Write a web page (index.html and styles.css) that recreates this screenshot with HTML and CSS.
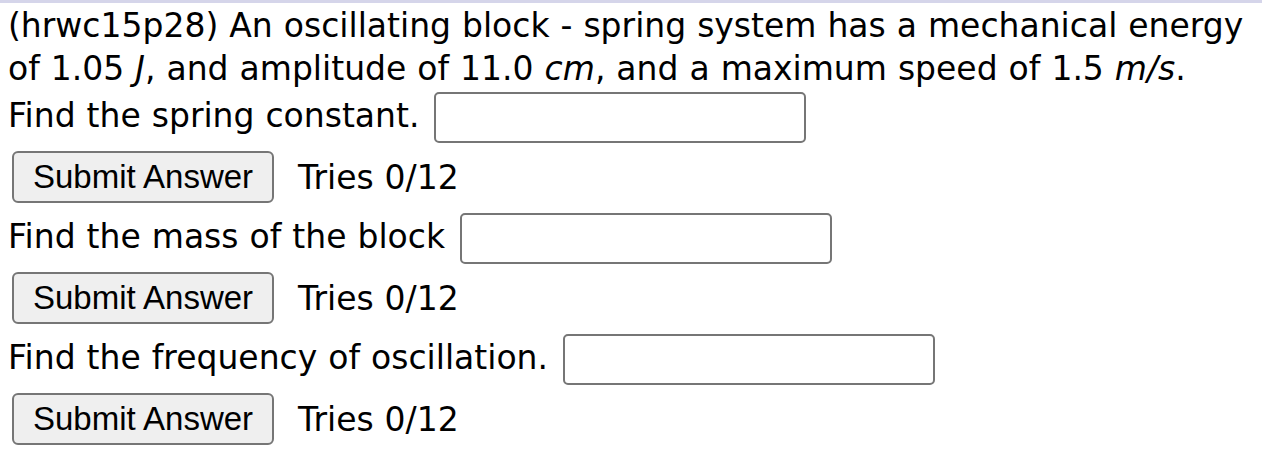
FILE: index.html
```html
<!DOCTYPE html>
<html lang="en">
<head>
    <meta charset="UTF-8">
    <title>hrwc15p28</title>
    <link rel="stylesheet" href="styles.css">
</head>
<body>
    <div class="problem">
        <p class="prompt">(hrwc15p28) An oscillating block - spring system has a mechanical energy of 1.05 <i>J</i>, and amplitude of 11.0 <i>cm</i>, and a maximum speed of 1.5 <i>m/s</i>. Find the spring constant. <input type="text" class="answer"></p>
        <div class="submit-row">
            <button class="submit">Submit Answer</button>
            <span class="tries">Tries 0/12</span>
        </div>

        <div class="prompt">Find the mass of the block <input type="text" class="answer"></div>
        <div class="submit-row">
            <button class="submit">Submit Answer</button>
            <span class="tries">Tries 0/12</span>
        </div>

        <div class="prompt">Find the frequency of oscillation. <input type="text" class="answer"></div>
        <div class="submit-row">
            <button class="submit">Submit Answer</button>
            <span class="tries">Tries 0/12</span>
        </div>
    </div>
</body>
</html>
```

FILE: styles.css
```css
body {
    margin: 0;
    padding: 0 8px;
    border-top: 3px solid #d5d5ea;
    background-color: #fff;
    color: #000;
    font-family: "DejaVu Sans", Verdana, sans-serif;
    font-size: 33px;
    word-spacing: 0.5px;
    line-height: 43px;
}
.prompt {
    margin: 0;
    padding-top: 1px;
}
.answer {
    width: 372px;
    height: 51px;
    box-sizing: border-box;
    margin: 2px 0 2px 4px;
    vertical-align: middle;
    border: 2px solid #767676;
    border-radius: 5px;
    background-color: #fff;
}
.submit-row {
    display: flex;
    align-items: center;
    margin: 6px 0 7px;
}
.submit {
    height: 52px;
    margin-left: 4px;
    padding: 0 19px;
    font-family: "Liberation Sans", Arial, sans-serif;
    font-size: 33px;
    word-spacing: 0;
    color: #000;
    background-color: #efefef;
    border: 2px solid #767676;
    border-radius: 6px;
}
.tries {
    margin-left: 24px;
}
```
